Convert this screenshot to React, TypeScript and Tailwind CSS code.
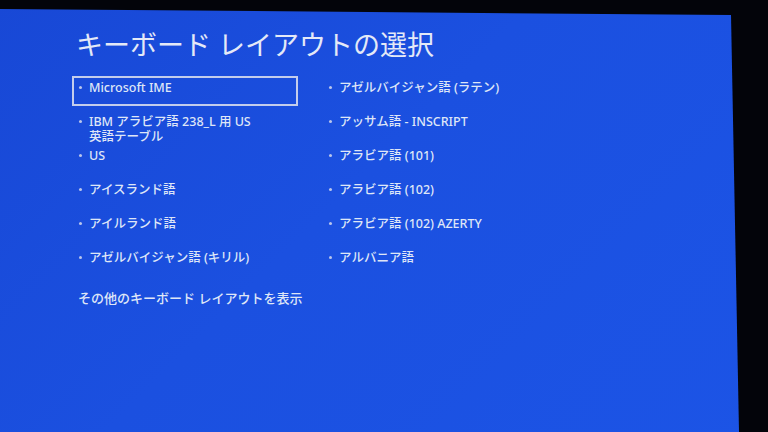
import React from "react";

const left: React.ReactNode[] = [
  "Microsoft IME",
  <>
    IBM アラビア語 238_L 用 US
    <br />
    英語テーブル
  </>,
  "US",
  "アイスランド語",
  "アイルランド語",
  "アゼルバイジャン語 (キリル)",
];

const right: string[] = [
  "アゼルバイジャン語 (ラテン)",
  "アッサム語 - INSCRIPT",
  "アラビア語 (101)",
  "アラビア語 (102)",
  "アラビア語 (102) AZERTY",
  "アルバニア語",
];

function Tile({ label, selected }: { label: React.ReactNode; selected?: boolean }) {
  return (
    <div
      className={
        "h-[30px] border-2 pl-[5px] pt-[2px] flex items-start gap-[7px] " +
        (selected ? "border-[#c3cdec]" : "border-transparent")
      }
    >
      <span className="mt-[6px] w-[3px] h-[3px] shrink-0 rounded-full bg-[#b9c5ec]" />
      <span className="text-[12.5px] leading-[15px] font-medium text-[#dfe6f7] whitespace-nowrap">
        {label}
      </span>
    </div>
  );
}

export default function App() {
  return (
    <div className="w-[768px] h-[432px] bg-[#03040a] overflow-hidden font-['Noto_Sans','Noto_Sans_CJK_JP',sans-serif]">
      <div className="w-full h-full bg-[linear-gradient(135deg,#1848d6_0%,#1b50e0_45%,#1c54e6_100%)] [clip-path:polygon(0px_9px,731px_15px,739px_432px,0px_432px)] pl-[72px] pt-[28px]">
        <h1 className="ml-[4px] text-[27px] leading-[34px] font-normal text-[#e4e9f7]">
          キーボード レイアウトの選択
        </h1>
        <div className="mt-[14px] grid grid-cols-[226px_226px] grid-rows-[repeat(6,30px)] grid-flow-col gap-x-[24px] gap-y-[4px]">
          {left.map((l, i) => (
            <Tile key={"l" + i} label={l} selected={i === 0} />
          ))}
          {right.map((r, i) => (
            <Tile key={"r" + i} label={r} />
          ))}
        </div>
        <div className="mt-[14px] ml-[6px] text-[13px] leading-[16px] font-medium text-[#dfe6f7]">
          その他のキーボード レイアウトを表示
        </div>
      </div>
    </div>
  );
}
